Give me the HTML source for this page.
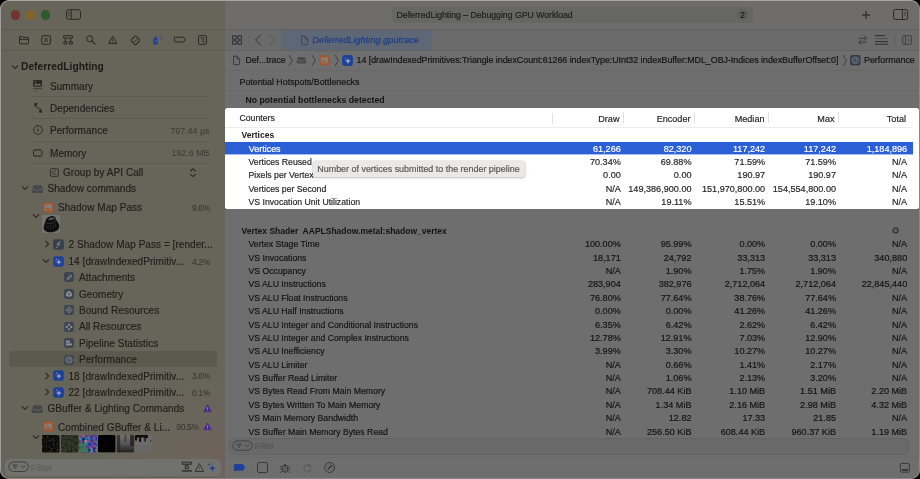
<!DOCTYPE html>
<html><head><meta charset="utf-8">
<style>
*{box-sizing:border-box;margin:0;padding:0}
html,body{width:920px;height:479px;overflow:hidden;background:#000;font-family:"Liberation Sans",sans-serif;}
#win{position:absolute;left:0;top:0;width:920px;height:479px;border-radius:9px;background:#6e6e6e;overflow:hidden}
#inner{position:absolute;left:0;top:0;width:920px;height:479px;overflow:hidden;will-change:transform}
#frame{position:absolute;left:0;top:0;width:920px;height:479px;border-radius:9px;border:1px solid;border-color:#a6a6a6 #8a8a8a #888685 #9f9f9f;pointer-events:none}
.abs{position:absolute}
.t{position:absolute;white-space:pre;line-height:12px;height:12px}
/* sidebar */
#sb{position:absolute;left:0;top:0;width:225px;height:479px;background:radial-gradient(ellipse 130px 80px at 100% 96%, rgba(113,98,93,.7), rgba(113,98,93,0) 100%),#67655a}
.st{position:absolute;white-space:pre;font-size:10px;line-height:12px;height:12px;color:#1f1e1a;letter-spacing:0.05px;margin-top:.6px}
.sv{position:absolute;white-space:pre;font-size:8.9px;line-height:12px;height:12px;color:#3b3a33;text-align:right;right:15.5px}
.sl{position:absolute;left:32px;width:179px;height:1px;background:#5d5b51}
/* main */
.mt{position:absolute;white-space:pre;font-size:8.7px;line-height:12px;height:12px;color:#141414}
.num{position:absolute;white-space:pre;font-size:9.1px;line-height:12px;height:12px;color:#141414;text-align:right}
.mt,.num{-webkit-text-stroke:.18px currentColor}
.st{-webkit-text-stroke:.15px currentColor}
.b{font-weight:700;-webkit-text-stroke:0}
</style></head><body>
<div id="win"><div id="inner">

<!-- ===== SIDEBAR ===== -->
<div id="sb">
 <!-- traffic lights -->
 <div class="abs" style="left:10.5px;top:10.2px;width:9.5px;height:9.5px;border-radius:50%;background:#73342c"></div>
 <div class="abs" style="left:25.5px;top:10.2px;width:9.5px;height:9.5px;border-radius:50%;background:#85662a"></div>
 <div class="abs" style="left:40.5px;top:10.2px;width:9.5px;height:9.5px;border-radius:50%;background:#2d5c2a"></div>
 <div class="abs" style="left:0;top:29px;width:225px;height:1px;background:#5d5b51"></div>
 <div class="abs" style="left:0;top:50px;width:225px;height:1px;background:#5d5b51"></div>
 <svg class="abs" style="left:65px;top:8px" width="17" height="13" viewBox="0 0 17 13"><rect x="1.5" y="1.7" width="14" height="9.6" rx="2.2" fill="none" stroke="#2a2924" stroke-width="1"/><path d="M6.2 1.7V11.3" stroke="#2a2924" stroke-width="1"/><path d="M3 4.3h1.8M3 6h1.8M3 7.7h1.8" stroke="#2a2924" stroke-width=".7"/></svg>
 <svg class="abs" style="left:18px;top:34px" width="12" height="12" viewBox="0 0 12 12"><path d="M1.5 2.6 h3 l0.7 0.8 h4.6 q0.7 0 0.7 0.7 v5 q0 0.7 -0.7 0.7 h-7.6 q-0.7 0 -0.7 -0.7 z" fill="none" stroke="#2a2924" stroke-width="1"/><path d="M1.5 5.3h9" stroke="#2a2924" stroke-width="1"/></svg>
 <svg class="abs" style="left:40px;top:34px" width="12" height="12" viewBox="0 0 12 12"><rect x="1.8" y="1.7" width="8.6" height="8.6" rx="1.2" fill="none" stroke="#2a2924" stroke-width="1"/><path d="M3.9 3.8l4.2 4.2M8.1 3.8l-4.2 4.2" stroke="#2a2924" stroke-width=".9"/></svg>
 <svg class="abs" style="left:62px;top:34px" width="12" height="12" viewBox="0 0 12 12"><rect x="1.7" y="1.7" width="8.8" height="2.4" rx=".2" fill="none" stroke="#2a2924" stroke-width="1"/><path d="M3.4 4.1v3.7M8.8 4.1v3.7" stroke="#2a2924" stroke-width="1"/><rect x="1.9" y="7.8" width="3" height="2.2" rx=".1" fill="none" stroke="#2a2924" stroke-width="1"/><rect x="7.3" y="7.8" width="3" height="2.2" rx=".1" fill="none" stroke="#2a2924" stroke-width="1"/></svg>
 <svg class="abs" style="left:85px;top:34px" width="12" height="12" viewBox="0 0 12 12"><circle cx="4.7" cy="4.7" r="3" fill="none" stroke="#2a2924" stroke-width="1"/><path d="M7 7l3 3" stroke="#2a2924" stroke-width="1.1" stroke-linecap="round"/></svg>
 <svg class="abs" style="left:107px;top:33.5px" width="12" height="12" viewBox="0 0 12 12"><path d="M5.7 2.1 L9.7 9.4 H1.7 Z" fill="none" stroke="#2a2924" stroke-width="1" stroke-linejoin="round"/><path d="M5.7 4.6v2.5" stroke="#2a2924" stroke-width=".9"/><circle cx="5.7" cy="8.2" r=".5" fill="#2a2924"/></svg>
 <svg class="abs" style="left:129px;top:33.5px" width="13" height="13" viewBox="0 0 13 13"><rect x="3.1" y="3.1" width="6.6" height="6.6" rx="1" transform="rotate(45 6.4 6.4)" fill="none" stroke="#2a2924" stroke-width="1"/><path d="M4.9 6.6l1.1 1.1 2-2.4" fill="none" stroke="#2a2924" stroke-width=".9"/></svg>
 <svg class="abs" style="left:151px;top:34px" width="13" height="12" viewBox="0 0 13 12"><path d="M2.2 4.6 L6 3.8 L7 10 L2.6 10.7 Z" fill="#1d3f9c"/><path d="M3.6 2.4 L5.4 2 L5.8 3.6 L3.9 4 Z" fill="#1d3f9c"/><path d="M4 6.3l1.4 1.6M5.4 6.1l-1.4 2" stroke="#6a6e84" stroke-width=".5"/><circle cx="7.8" cy="3.2" r=".45" fill="#1d3f9c"/><circle cx="9.4" cy="2.2" r=".45" fill="#1d3f9c"/><circle cx="9.2" cy="4.2" r=".45" fill="#1d3f9c"/><circle cx="10.9" cy="3" r=".45" fill="#1d3f9c"/><circle cx="10.7" cy="5.3" r=".45" fill="#1d3f9c"/><circle cx="8.2" cy="5" r=".4" fill="#1d3f9c"/></svg>
 <svg class="abs" style="left:173px;top:34px" width="14" height="12" viewBox="0 0 14 12"><path d="M2.4 3.2 h7.8 q.5 0 .8 .4 l1 1.5 q.3 .5 0 1 l-1 1.5 q-.3 .4 -.8 .4 h-7.8 q-.9 0 -.9 -.9 v-3 q0 -.9 .9 -.9 z" fill="none" stroke="#2a2924" stroke-width="1"/></svg>
 <svg class="abs" style="left:197px;top:34px" width="12" height="12" viewBox="0 0 12 12"><rect x="1.5" y="1.7" width="8" height="8.6" rx="1.5" fill="none" stroke="#2a2924" stroke-width="1"/><path d="M3.4 4h4.2M5 5.9h2.6M5 7.8h2.6" stroke="#2a2924" stroke-width=".8"/></svg>
 <!--SBICONS2-->
 <svg class="abs" style="left:10.5px;top:62.5px" width="8" height="8" viewBox="0 0 8 8"><path d="M1.2 2.7 L4 5.4 L6.8 2.7" fill="none" stroke="#2a2924" stroke-width="1.1" stroke-linecap="round" stroke-linejoin="round"/></svg>
 <div class="st b" style="left:21px;top:60.5px;font-size:10.2px;color:#1a1916">DeferredLighting</div>
 <div class="st" style="left:50px;top:80px;">Summary</div>
 <div class="sl" style="top:96px"></div>
 <div class="st" style="left:50px;top:102.3px;">Dependencies</div>
 <div class="sl" style="top:118px"></div>
 <div class="st" style="left:50px;top:124.5px;">Performance</div>
 <div class="sv" style="top:124.5px">797.44 µs</div>
 <div class="sl" style="top:141px"></div>
 <div class="st" style="left:50px;top:147px;">Memory</div>
 <div class="sv" style="top:147px">192.6 MB</div>
 <div class="sl" style="top:163px"></div>
 <div class="st" style="left:63px;top:166.5px;">Group by API Call</div>
 <svg class="abs" style="left:21px;top:184.3px" width="8" height="8" viewBox="0 0 8 8"><path d="M1.2 2.7 L4 5.4 L6.8 2.7" fill="none" stroke="#2a2924" stroke-width="1.1" stroke-linecap="round" stroke-linejoin="round"/></svg>
 <div class="st" style="left:47.5px;top:182.5px;">Shadow commands</div>
 <div class="st" style="left:58px;top:201.5px;">Shadow Map Pass</div>
 <div class="sv" style="top:201.5px;font-size:8.6px;letter-spacing:-.4px;color:#33322c;right:15px">9.6%</div>
 <svg class="abs" style="left:31.5px;top:212.3px" width="8" height="8" viewBox="0 0 8 8"><path d="M1.2 2.7 L4 5.4 L6.8 2.7" fill="none" stroke="#2a2924" stroke-width="1.1" stroke-linecap="round" stroke-linejoin="round"/></svg>
 <svg class="abs" style="left:42.5px;top:240px" width="8" height="8" viewBox="0 0 8 8"><path d="M2.8 1.2 L5.5 4 L2.8 6.8" fill="none" stroke="#2a2924" stroke-width="1.1" stroke-linecap="round" stroke-linejoin="round"/></svg>
 <div class="st" style="left:68.5px;top:238.5px;">2 Shadow Map Pass = [render...</div>
 <svg class="abs" style="left:42px;top:257px" width="8" height="8" viewBox="0 0 8 8"><path d="M1.2 2.7 L4 5.4 L6.8 2.7" fill="none" stroke="#2a2924" stroke-width="1.1" stroke-linecap="round" stroke-linejoin="round"/></svg>
 <div class="st" style="left:68.5px;top:255.5px;">14 [drawIndexedPrimitiv...</div>
 <div class="sv" style="top:255.5px;font-size:8.6px;letter-spacing:-.4px;color:#33322c;right:15px">4.2%</div>
 <div class="st" style="left:79px;top:271.5px;">Attachments</div>
 <div class="st" style="left:79px;top:288px;">Geometry</div>
 <div class="st" style="left:79px;top:304.5px;">Bound Resources</div>
 <div class="st" style="left:79px;top:320.5px;">All Resources</div>
 <div class="st" style="left:79px;top:337px;">Pipeline Statistics</div>
 <div class="abs" style="left:9px;top:351px;width:208px;height:16px;border-radius:3px;background:#5c5a4e"></div>
 <div class="st" style="left:79px;top:353.5px;">Performance</div>
 <svg class="abs" style="left:42.5px;top:371.5px" width="8" height="8" viewBox="0 0 8 8"><path d="M2.8 1.2 L5.5 4 L2.8 6.8" fill="none" stroke="#2a2924" stroke-width="1.1" stroke-linecap="round" stroke-linejoin="round"/></svg>
 <div class="st" style="left:68.5px;top:370px;">18 [drawIndexedPrimitiv...</div>
 <div class="sv" style="top:370px;font-size:8.6px;letter-spacing:-.4px;color:#33322c;right:15px">3.6%</div>
 <svg class="abs" style="left:42.5px;top:388px" width="8" height="8" viewBox="0 0 8 8"><path d="M2.8 1.2 L5.5 4 L2.8 6.8" fill="none" stroke="#2a2924" stroke-width="1.1" stroke-linecap="round" stroke-linejoin="round"/></svg>
 <div class="st" style="left:68.5px;top:386.5px;">22 [drawIndexedPrimitiv...</div>
 <div class="sv" style="top:386.5px;font-size:8.6px;letter-spacing:-.4px;color:#33322c;right:15px">0.1%</div>
 <svg class="abs" style="left:21px;top:404.3px" width="8" height="8" viewBox="0 0 8 8"><path d="M1.2 2.7 L4 5.4 L6.8 2.7" fill="none" stroke="#2a2924" stroke-width="1.1" stroke-linecap="round" stroke-linejoin="round"/></svg>
 <div class="st" style="left:47.5px;top:402.8px;">GBuffer &amp; Lighting Commands</div>
 <div class="st" style="left:58px;top:421px;">Combined GBuffer &amp; Li...</div>
 <div class="sv" style="top:421px;right:auto;left:176.3px;font-size:8.6px;letter-spacing:-.4px;color:#33322c">90.5%</div>
 <svg class="abs" style="left:31.5px;top:432.5px" width="8" height="8" viewBox="0 0 8 8"><path d="M1.2 2.7 L4 5.4 L6.8 2.7" fill="none" stroke="#2a2924" stroke-width="1.1" stroke-linecap="round" stroke-linejoin="round"/></svg>
 <svg class="abs" style="left:32px;top:79px" width="12" height="14" viewBox="0 0 12 14"><rect x="1.2" y="0.9" width="8.8" height="6.8" rx=".8" fill="#2a2924"/><path d="M1.8 6.6 L4.2 4 L5.8 5.6 L7.2 4.6 L9.4 6.6 Z" fill="#6f6d63"/><circle cx="3.4" cy="2.9" r=".7" fill="#6f6d63"/><path d="M1.2 9.6h8.8" stroke="#3a3933" stroke-width=".9"/><path d="M1.2 11.9h5.6" stroke="#504e46" stroke-width=".8"/></svg>
 <svg class="abs" style="left:32px;top:101px" width="12" height="14" viewBox="0 0 12 14"><rect x="2.2" y="2" width="2.9" height="2.9" rx=".6" fill="#2a2924"/><rect x="7.1" y="8.8" width="2.9" height="2.9" rx=".6" fill="#2a2924"/><path d="M3.7 4.8 C3.7 8.2 8.5 5.6 8.5 9" fill="none" stroke="#2a2924" stroke-width="1"/></svg>
 <svg class="abs" style="left:32px;top:124px" width="12" height="12" viewBox="0 0 12 12"><circle cx="5.95" cy="5.9" r="4.4" fill="none" stroke="#2a2924" stroke-width=".9"/><path d="M5.95 2.3v1.3" stroke="#2a2924" stroke-width=".8"/><path d="M5.95 5v1.6" stroke="#2a2924" stroke-width=".9" stroke-linecap="round"/><circle cx="5.95" cy="6.6" r=".6" fill="#2a2924"/></svg>
 <svg class="abs" style="left:32px;top:147px" width="12" height="12" viewBox="0 0 12 12"><rect x="1.5" y="3" width="8.4" height="6" rx="1.2" fill="none" stroke="#2a2924" stroke-width="1"/><path d="M3.6 2v1M7.8 2v1M3.6 9v1.1M7.8 9v1.1" stroke="#2a2924" stroke-width="1"/></svg>
 <svg class="abs" style="left:49px;top:167px" width="11" height="11" viewBox="0 0 11 11"><rect x="1.4" y="1.6" width="8" height="7.8" rx="1.5" fill="none" stroke="#2a2924" stroke-width=".9"/><path d="M6.9 4.4 A1.8 1.8 0 1 0 6.9 6.7" fill="none" stroke="#2a2924" stroke-width=".8"/></svg>
 <svg class="abs" style="left:188px;top:166px" width="10" height="13" viewBox="0 0 10 13"><path d="M2.6 5 L5 2.7 L7.4 5 M2.6 8.3 L5 10.6 L7.4 8.3" fill="none" stroke="#2a2924" stroke-width="1.05" stroke-linecap="round" stroke-linejoin="round"/></svg>
 <svg class="abs" style="left:31.3px;top:183.9px" width="13" height="11" viewBox="0 0 13 11"><path d="M3.2 1.2 h6.4 q.6 0 .9 .6 l1.5 3.3 v3 q0 1 -1 1 h-9.2 q-1 0 -1 -1 v-3 l1.5 -3.3 q.3 -.6 .9 -.6 z" fill="#44474c"/><path d="M1 5.3 h3.3 q.3 1.3 2.1 1.3 q1.8 0 2.1 -1.3 h3.3" fill="none" stroke="#69675c" stroke-width=".8"/></svg>
 <svg class="abs" style="left:31.3px;top:403.9px" width="13" height="11" viewBox="0 0 13 11"><path d="M3.2 1.2 h6.4 q.6 0 .9 .6 l1.5 3.3 v3 q0 1 -1 1 h-9.2 q-1 0 -1 -1 v-3 l1.5 -3.3 q.3 -.6 .9 -.6 z" fill="#44474c"/><path d="M1 5.3 h3.3 q.3 1.3 2.1 1.3 q1.8 0 2.1 -1.3 h3.3" fill="none" stroke="#69675c" stroke-width=".8"/></svg>
 <svg class="abs" style="left:43px;top:201.7px" width="11" height="11" viewBox="0 0 11 11"><rect x=".3" y=".4" width="10" height="10" rx="2.2" fill="#a2562f"/><rect x="1.7" y="2.4" width="7.2" height="5.9" rx=".9" fill="#83817c"/><path d="M2.4 7.4 L4.2 5.4 L5.4 6.5 L6.6 5.7 L8.2 7.4 Z" fill="#a2562f"/><circle cx="3.9" cy="4.1" r=".7" fill="#a2562f"/></svg>
 <svg class="abs" style="left:43px;top:421.3px" width="11" height="11" viewBox="0 0 11 11"><rect x=".3" y=".4" width="10" height="10" rx="2.2" fill="#a2562f"/><rect x="1.7" y="2.4" width="7.2" height="5.9" rx=".9" fill="#83817c"/><path d="M2.4 7.4 L4.2 5.4 L5.4 6.5 L6.6 5.7 L8.2 7.4 Z" fill="#a2562f"/><circle cx="3.9" cy="4.1" r=".7" fill="#a2562f"/></svg>
 <svg class="abs" style="left:42px;top:215px" width="18" height="18" viewBox="0 0 18 18"><rect width="18" height="18" rx="1.5" fill="#757471"/><path d="M2.4 15 C0.8 12.6 2.6 8.8 3.4 6.4 C3.8 3.6 6.4 1.2 10.4 1 C13 0.9 14.2 2.8 13.8 4.8 C16 6.6 17.6 9.6 17.2 12.4 C16.6 15.4 12.8 17.2 8.6 17.3 C6 17.3 3.6 16.6 2.4 15 Z" fill="#0e0e0e"/><path d="M5.8 4.6 C7.4 2.8 10.6 2.2 12 3.2 C11 5 7.6 5.8 5.8 4.6 Z" fill="#454545"/><path d="M8 2.6 L9.6 4.8 M11 1.8 L12.4 4.6" stroke="#8a8a8a" stroke-width=".7"/><path d="M3.8 7.6 C6.6 9.4 12 8.6 13.8 5.6" stroke="#3a3a3a" stroke-width=".8" fill="none"/><path d="M6 9.8v4M8.6 10.2v4M11.2 9.6v3.8M13.4 8.6v3.4" stroke="#2c2c2c" stroke-width=".8"/></svg>
 <svg class="abs" style="left:53px;top:239px" width="11" height="11" viewBox="0 0 11 11"><rect x=".2" y=".2" width="10.6" height="10.6" rx="2.4" fill="#373e4b"/><path d="M7.3 2.7 Q5.9 2.2 5.6 3.9 L4.9 7.6 Q4.6 9 3.5 8.5 M3.9 5.2 H7.1" fill="none" stroke="#878b92" stroke-width=".9" stroke-linecap="round"/></svg>
 <svg class="abs" style="left:53px;top:255.6px" width="11" height="11" viewBox="0 0 11 11"><rect x=".2" y=".2" width="10.6" height="10.6" rx="2.4" fill="#1f4097"/><path d="M5.9 3.7 Q6.1 5.9 8.4 6.1 Q6.1 6.3 5.9 8.6 Q5.7 6.3 3.4 6.1 Q5.7 5.9 5.9 3.7 Z" fill="#a3add0" stroke="#a3add0" stroke-width=".25"/><circle cx="3.6" cy="3.3" r=".7" fill="#7f8cb8"/><circle cx="2.9" cy="5" r=".4" fill="#7f8cb8"/></svg>
 <svg class="abs" style="left:53px;top:370.4px" width="11" height="11" viewBox="0 0 11 11"><rect x=".2" y=".2" width="10.6" height="10.6" rx="2.4" fill="#1f4097"/><path d="M5.9 3.7 Q6.1 5.9 8.4 6.1 Q6.1 6.3 5.9 8.6 Q5.7 6.3 3.4 6.1 Q5.7 5.9 5.9 3.7 Z" fill="#a3add0" stroke="#a3add0" stroke-width=".25"/><circle cx="3.6" cy="3.3" r=".7" fill="#7f8cb8"/><circle cx="2.9" cy="5" r=".4" fill="#7f8cb8"/></svg>
 <svg class="abs" style="left:53px;top:387px" width="11" height="11" viewBox="0 0 11 11"><rect x=".2" y=".2" width="10.6" height="10.6" rx="2.4" fill="#1f4097"/><path d="M5.9 3.7 Q6.1 5.9 8.4 6.1 Q6.1 6.3 5.9 8.6 Q5.7 6.3 3.4 6.1 Q5.7 5.9 5.9 3.7 Z" fill="#a3add0" stroke="#a3add0" stroke-width=".25"/><circle cx="3.6" cy="3.3" r=".7" fill="#7f8cb8"/><circle cx="2.9" cy="5" r=".4" fill="#7f8cb8"/></svg>
 <svg class="abs" style="left:64px;top:272px" width="10" height="10" viewBox="0 0 10 10"><rect x=".1" y=".1" width="9.8" height="9.8" rx="2.1" fill="#3d4451"/><path d="M3 6.6 L6 3.4 Q6.9 2.6 7.5 3.3 Q8.1 4 7.3 4.8 L4.4 7.6 Q3.9 8 3.5 7.6 Q3.2 7.2 3.7 6.7 L6.2 4.3" fill="none" stroke="#8c9097" stroke-width=".75" stroke-linecap="round"/></svg>
 <svg class="abs" style="left:64px;top:288.6px" width="10" height="10" viewBox="0 0 10 10"><rect x=".1" y=".1" width="9.8" height="9.8" rx="2.1" fill="#3d4451"/><path d="M5 2 L8 3.5 V6.8 L5 8.3 L2 6.8 V3.5 Z" fill="#8c9097"/><path d="M2 3.5 L5 5 L8 3.5 M5 5 V8.3" fill="none" stroke="#3d4451" stroke-width=".6"/></svg>
 <svg class="abs" style="left:64px;top:305px" width="10" height="10" viewBox="0 0 10 10"><rect x=".1" y=".1" width="9.8" height="9.8" rx="2.1" fill="#3d4451"/><circle cx="5" cy="2.7" r="1" fill="none" stroke="#8c9097" stroke-width=".6"/><circle cx="5" cy="7.3" r="1" fill="none" stroke="#8c9097" stroke-width=".6"/><circle cx="2.7" cy="5" r="1" fill="none" stroke="#8c9097" stroke-width=".6"/><circle cx="7.3" cy="5" r="1" fill="none" stroke="#8c9097" stroke-width=".6"/><circle cx="5" cy="5" r=".7" fill="#8c9097"/></svg>
 <svg class="abs" style="left:64px;top:321.5px" width="10" height="10" viewBox="0 0 10 10"><rect x=".1" y=".1" width="9.8" height="9.8" rx="2.1" fill="#3d4451"/><circle cx="5" cy="2.7" r="1.15" fill="#8c9097"/><circle cx="5" cy="7.3" r="1.15" fill="#8c9097"/><circle cx="2.7" cy="5" r="1.15" fill="#8c9097"/><circle cx="7.3" cy="5" r="1.15" fill="#8c9097"/></svg>
 <svg class="abs" style="left:64px;top:338px" width="10" height="10" viewBox="0 0 10 10"><rect x=".1" y=".1" width="9.8" height="9.8" rx="2.1" fill="#3d4451"/><path d="M2.3 2v6" stroke="#8c9097" stroke-width=".8"/><rect x="2.8" y="2.6" width="3.2" height="2" fill="#8c9097"/><rect x="2.8" y="5.4" width="5.2" height="2" fill="#8c9097"/></svg>
 <svg class="abs" style="left:64px;top:354.6px" width="10" height="10" viewBox="0 0 10 10"><rect x=".1" y=".1" width="9.8" height="9.8" rx="2.1" fill="#3d4451"/><circle cx="5" cy="5" r="3.2" fill="none" stroke="#8c9097" stroke-width=".7"/><circle cx="5" cy="5" r="1.7" fill="none" stroke="#8c9097" stroke-width=".6"/><path d="M5 5 L6.6 3.6" stroke="#8c9097" stroke-width=".6"/></svg>
 <svg class="abs" style="left:203px;top:403.8px" width="9" height="9" viewBox="0 0 9 9"><path d="M4.5 .8 L8.4 7.8 H.6 Z" fill="#4a2a8e" stroke="#4a2a8e" stroke-width=".6" stroke-linejoin="round"/><path d="M4.5 3.2v2.4" stroke="#a79bc4" stroke-width=".8"/><circle cx="4.5" cy="6.7" r=".45" fill="#a79bc4"/></svg>
 <svg class="abs" style="left:203px;top:422.2px" width="9" height="9" viewBox="0 0 9 9"><path d="M4.5 .8 L8.4 7.8 H.6 Z" fill="#4a2a8e" stroke="#4a2a8e" stroke-width=".6" stroke-linejoin="round"/><path d="M4.5 3.2v2.4" stroke="#a79bc4" stroke-width=".8"/><circle cx="4.5" cy="6.7" r=".45" fill="#a79bc4"/></svg>
 <svg class="abs" style="left:42.4px;top:435px" width="111" height="18" viewBox="0 0 111 18"><defs>
<filter id="n1" x="0" y="0" width="100%" height="100%" color-interpolation-filters="sRGB"><feTurbulence type="fractalNoise" baseFrequency="0.55" numOctaves="2" seed="3"/><feColorMatrix type="matrix" values="0 0 0 0 0.24  0 0 0 0 0.25  0 0 0 0 0.19  4 0 0 0 -2.2"/><feComposite operator="over" in2="SourceGraphic"/></filter>
<filter id="n2" x="0" y="0" width="100%" height="100%" color-interpolation-filters="sRGB"><feTurbulence type="fractalNoise" baseFrequency="0.5" numOctaves="2" seed="8"/><feColorMatrix type="matrix" values="0 0 0 0 0.09  0 0 0 0 0.10  0 0 0 0 0.06  4 0 0 0 -1.9"/><feComposite operator="over" in2="SourceGraphic"/></filter>
<filter id="n3" x="0" y="0" width="100%" height="100%" color-interpolation-filters="sRGB"><feTurbulence type="fractalNoise" baseFrequency="0.35" numOctaves="2" seed="5"/><feColorMatrix type="matrix" values="1.1 0 0 0 -0.25  0 1.1 0 0 -0.22  0 0 0.9 0 0.1  0 0 0 0 1"/></filter>
<linearGradient id="g5" x1="0" y1="0" x2="0" y2="1"><stop offset="0" stop-color="#727272"/><stop offset=".5" stop-color="#555"/><stop offset="1" stop-color="#1e1e1e"/></linearGradient>
<clipPath id="cp"><rect width="17.6" height="17.6" rx="1.6"/></clipPath>
</defs><g clip-path="url(#cp)"><rect width="17.6" height="17.6" fill="#0b0c09"/><rect width="17.6" height="17.6" fill="#0b0c09" filter="url(#n1)"/></g><g transform="translate(19 0)" clip-path="url(#cp)"><rect width="17.6" height="17.6" fill="#33372a"/><rect width="17.6" height="17.6" fill="#33372a" filter="url(#n2)"/></g><g transform="translate(37.2 0)" clip-path="url(#cp)"><rect width="17.6" height="17.6" fill="#3a3f8c"/><rect width="17.6" height="17.6" filter="url(#n3)"/><path d="M0 9 Q4 7 7 11 T10 17.6 H0 Z" fill="#3a7a42" opacity=".7"/><path d="M9 0 Q12 6 10 12 L14 14 L17.6 6 V0 Z" fill="#4a3c98" opacity=".5"/></g><g transform="translate(56 0)" clip-path="url(#cp)"><rect width="17.6" height="17.6" fill="#020202"/><rect x="6" y="7" width=".8" height=".8" fill="#5a1010"/></g><g transform="translate(74.7 0)" clip-path="url(#cp)"><rect width="17.6" height="17.6" fill="url(#g5)"/><rect x="0" y="0" width="3.4" height="17.6" fill="#222" opacity=".7"/><rect x="13.5" y="0" width="4.1" height="11" fill="#1b1b1b" opacity=".8"/><rect x="7.6" y="0" width="2.2" height="7" fill="#3a3a3a" opacity=".7"/></g><g transform="translate(92.8 0)" clip-path="url(#cp)"><rect width="17.6" height="17.6" fill="#6b6b6b"/><path d="M0 0 H13 V3 H11 V6.5 H9.6 V2.4 H6.2 V7 H4.4 V2.6 H2.2 V5.4 H0 Z" fill="#0c0c0c"/><rect x="15.4" y="5.4" width="1" height="1.2" fill="#111"/><rect x="0" y="10" width="17.6" height="7.6" fill="#686868"/></g></svg>
 <div class="abs" style="left:5px;top:459px;width:215.5px;height:16.5px;border-radius:5px;background:#71716e"></div>
 <svg class="abs" style="left:7.5px;top:461.2px" width="22" height="12" viewBox="0 0 22 12"><rect x=".9" y=".9" width="19.4" height="9.6" rx="4.8" fill="none" stroke="#34332f" stroke-width=".8"/><path d="M4.3 4h5.6M5.3 5.7h3.6M6.3 7.4h1.6" stroke="#34332f" stroke-width=".8"/><path d="M13.2 4.7l1.9 1.9 1.9-1.9" fill="none" stroke="#34332f" stroke-width=".8" stroke-linecap="round" stroke-linejoin="round"/></svg>
 <div class="st" style="left:30.6px;top:461px;color:#5f5e59;font-size:9.6px">Filter</div>
 <svg class="abs" style="left:180.5px;top:461.2px" width="12" height="12" viewBox="0 0 12 12"><rect x="1.2" y="1.2" width="9.2" height="2" fill="none" stroke="#2e2d2a" stroke-width="1"/><rect x="4.3" y="4.9" width="3" height="2.6" fill="none" stroke="#2e2d2a" stroke-width="1"/><path d="M5.8 3.2v1.7" stroke="#2e2d2a" stroke-width="1"/><path d="M.8 9.9h10" stroke="#2e2d2a" stroke-width="1.5"/></svg>
 <svg class="abs" style="left:193.6px;top:461.8px" width="11" height="11" viewBox="0 0 11 11"><path d="M5.4 1.5 L9.6 9.5 H1.2 Z" fill="none" stroke="#2e2d2a" stroke-width=".9" stroke-linejoin="round"/><path d="M5.4 4.3v2.6" stroke="#4a4945" stroke-width=".8"/><circle cx="5.4" cy="8" r=".45" fill="#4a4945"/></svg>
 <svg class="abs" style="left:206.3px;top:461px" width="11" height="12" viewBox="0 0 11 12"><path d="M6.3 3.6 Q6.6 7 9.9 7.3 Q6.6 7.6 6.3 11 Q6 7.6 2.7 7.3 Q6 7 6.3 3.6 Z" fill="#1f4097"/><path d="M3 1.9 Q3.1 3.3 4.5 3.4 Q3.1 3.5 3 4.9 Q2.9 3.5 1.5 3.4 Q2.9 3.3 3 1.9 Z" fill="#1f4097"/><circle cx="5.2" cy="1.5" r=".5" fill="#1f4097"/></svg>
 <!--SBROWS4-->
</div>

<!-- ===== MAIN ===== -->
<div id="main" class="abs" style="left:225px;top:0;width:695px;height:479px;background:#6e6e6e">
 <div class="abs" style="left:0;top:0;width:695px;height:29px;background:#6e6d6c"></div>
 <div class="abs" style="left:0;top:29px;width:695px;height:1px;background:#616161"></div>
 <div class="abs" style="left:166.5px;top:7px;width:361.5px;height:16px;border-radius:4px;background:#666665"></div>
 <div class="mt" style="left:171.60000000000002px;top:9px;font-size:8.7px;color:#1d1d1d">DeferredLighting – Debugging GPU Workload</div>
 <div class="abs" style="left:512px;top:9.3px;width:11px;height:11px;border-radius:5.5px;background:#5f5f5e"></div>
 <div class="mt" style="left:512px;top:9px;width:11px;text-align:center;font-size:8.3px;color:#181818">2</div>
 <div class="abs" style="left:0;top:30px;width:695px;height:20px;background:#6b6b6b"></div>
 <div class="abs" style="left:57px;top:30px;width:150px;height:20px;background:#5e6775"></div>
 <div class="mt" style="left:87.5px;top:34px;font-size:9px;font-style:italic;color:#1b3c86;letter-spacing:0.1px">DeferredLighting.gputrace</div>
 <div class="abs" style="left:0;top:50px;width:695px;height:1px;background:#626262"></div>
 <div class="mt" style="left:20.5px;top:54px;font-size:8.7px">Def...trace</div>
 <div class="mt" style="left:131.5px;top:54px;font-size:8.9px;letter-spacing:-0.04px">14 [drawIndexedPrimitives:Triangle indexCount:61266 indexType:UInt32 indexBuffer:MDL_OBJ-Indices indexBufferOffset:0]</div>
 <div class="mt" style="left:639px;top:54px;font-size:8.9px">Performance</div>
 <div class="abs" style="left:0;top:70px;width:695px;height:1px;background:#676767"></div>
 <div class="mt" style="left:14.5px;top:76px;font-size:8.85px">Potential Hotspots/Bottlenecks</div>
 <div class="abs" style="left:0;top:90px;width:695px;height:1px;background:#696969"></div>
 <div class="mt b" style="left:20.5px;top:94.3px;font-size:8.7px;color:#131313">No potential bottlenecks detected</div>
 <svg class="abs" style="left:636px;top:10px" width="10" height="10" viewBox="0 0 10 10"><path d="M5 1v8M1 5h8" stroke="#343434" stroke-width="1.3"/></svg>
 <svg class="abs" style="left:667px;top:8px" width="17" height="13" viewBox="0 0 17 13"><rect x="1.6" y="1.5" width="14" height="10" rx="1.8" fill="none" stroke="#2b2b2b" stroke-width="1"/><path d="M10.4 1.5v10" stroke="#2b2b2b" stroke-width="1"/><path d="M12 4h2M12 5.6h2M12 7.2h2" stroke="#2b2b2b" stroke-width=".6"/></svg>
 <svg class="abs" style="left:6px;top:34px" width="12" height="12" viewBox="0 0 12 12"><rect x="1.5" y="1.7" width="3.7" height="3.5" rx=".2" fill="none" stroke="#2e2e2e" stroke-width="1"/><rect x="6.8" y="1.7" width="3.7" height="3.5" rx=".2" fill="none" stroke="#2e2e2e" stroke-width="1"/><rect x="1.5" y="6.8" width="3.7" height="3.5" rx=".2" fill="none" stroke="#2e2e2e" stroke-width="1"/><rect x="6.8" y="6.8" width="3.7" height="3.5" rx=".2" fill="none" stroke="#2e2e2e" stroke-width="1"/></svg>
 <div class="abs" style="left:23px;top:36px;width:1px;height:8px;background:#646464"></div>
 <svg class="abs" style="left:28px;top:33px" width="10" height="14" viewBox="0 0 10 14"><path d="M7.6 2 L2.6 7 L7.6 12" fill="none" stroke="#353535" stroke-width="1" stroke-linecap="round" stroke-linejoin="round"/></svg>
 <svg class="abs" style="left:43px;top:33px" width="10" height="14" viewBox="0 0 10 14"><path d="M2.4 2 L7.4 7 L2.4 12" fill="none" stroke="#565656" stroke-width="1" stroke-linecap="round" stroke-linejoin="round"/></svg>
 <svg class="abs" style="left:75.3px;top:35px" width="9" height="11" viewBox="0 0 9 11"><path d="M1.6 1.2 h3.4 l2.6 2.6 v5 q0 .9 -.9 .9 h-4.2 q-.9 0 -.9 -.9 v-6.7 q0 -.9 .9 -.9 z" fill="none" stroke="#3b424f" stroke-width=".9" stroke-linejoin="round"/><path d="M5 1.2 v2.6 h2.6" fill="none" stroke="#3b424f" stroke-width=".8"/></svg>
 <svg class="abs" style="left:7.3px;top:55.2px" width="9" height="11" viewBox="0 0 9 11"><path d="M1.6 1.2 h3.4 l2.6 2.6 v5 q0 .9 -.9 .9 h-4.2 q-.9 0 -.9 -.9 v-6.7 q0 -.9 .9 -.9 z" fill="none" stroke="#2d3442" stroke-width=".9" stroke-linejoin="round"/><path d="M5 1.2 v2.6 h2.6" fill="none" stroke="#2d3442" stroke-width=".8"/></svg>
 <svg class="abs" style="left:63.2px;top:54px" width="6" height="13" viewBox="0 0 6 13"><path d="M1.2 1.4 L4.4 6.5 L1.2 11.6" fill="none" stroke="#3a3a3a" stroke-width=".9" stroke-linecap="round" stroke-linejoin="round"/></svg>
 <svg class="abs" style="left:86.2px;top:54px" width="6" height="13" viewBox="0 0 6 13"><path d="M1.2 1.4 L4.4 6.5 L1.2 11.6" fill="none" stroke="#3a3a3a" stroke-width=".9" stroke-linecap="round" stroke-linejoin="round"/></svg>
 <svg class="abs" style="left:109.2px;top:54px" width="6" height="13" viewBox="0 0 6 13"><path d="M1.2 1.4 L4.4 6.5 L1.2 11.6" fill="none" stroke="#3a3a3a" stroke-width=".9" stroke-linecap="round" stroke-linejoin="round"/></svg>
 <svg class="abs" style="left:616.5px;top:54px" width="6" height="13" viewBox="0 0 6 13"><path d="M1.2 1.4 L4.4 6.5 L1.2 11.6" fill="none" stroke="#3a3a3a" stroke-width=".9" stroke-linecap="round" stroke-linejoin="round"/></svg>
 <svg class="abs" style="left:71px;top:56.3px" width="11" height="9" viewBox="0 0 11 9"><path d="M2.8 1 h5.4 q.5 0 .8 .5 l1.3 2.7 v2.5 q0 .9 -.9 .9 h-7.8 q-.9 0 -.9 -.9 v-2.5 l1.3 -2.7 q.3 -.5 .8 -.5 z" fill="#484a4d"/><path d="M1 4.4 h2.8 q.3 1.1 1.7 1.1 q1.4 0 1.7 -1.1 h2.8" fill="none" stroke="#6e6e6e" stroke-width=".7"/></svg>
 <svg class="abs" style="left:94px;top:55px" width="11" height="11" viewBox="0 0 11 11"><rect x=".2" y=".2" width="10.4" height="10.2" rx="2.4" fill="#a2562f"/><rect x="1.8" y="2.5" width="7.2" height="5.7" rx=".9" fill="#83817c"/><path d="M2.5 7.3 L4.3 5.3 L5.5 6.4 L6.7 5.6 L8.3 7.3 Z" fill="#a2562f"/><circle cx="4" cy="4.1" r=".7" fill="#a2562f"/></svg>
 <svg class="abs" style="left:117px;top:55px" width="11" height="11" viewBox="0 0 11 11"><rect x=".1" y=".1" width="10.8" height="10.8" rx="3" fill="#1f4097"/><path d="M6 3.5 Q6.2 5.9 8.6 6.1 Q6.2 6.3 6 8.7 Q5.8 6.3 3.4 6.1 Q5.8 5.9 6 3.5 Z" fill="#a3add0" stroke="#a3add0" stroke-width=".25"/><circle cx="3.7" cy="3.1" r=".7" fill="#7f8cb8"/><circle cx="2.9" cy="4.9" r=".4" fill="#7f8cb8"/></svg>
 <svg class="abs" style="left:624.6px;top:55px" width="11" height="11" viewBox="0 0 11 11"><rect x=".1" y=".1" width="10.4" height="10.4" rx="2.3" fill="#343b47"/><circle cx="5.3" cy="5.3" r="3.4" fill="none" stroke="#8c9097" stroke-width=".7"/><circle cx="5.3" cy="5.3" r="1.8" fill="none" stroke="#8c9097" stroke-width=".6"/><path d="M5.3 5.3 L7 3.8" stroke="#8c9097" stroke-width=".6"/></svg>
 <svg class="abs" style="left:632px;top:34px" width="11" height="12" viewBox="0 0 11 12"><path d="M2 4.3 H9.3 M7 1.9 L9.4 4.3 L7 6.7 M9.2 8.3 H1.8 M4.2 5.9 L1.8 8.3 L4.2 10.7" fill="none" stroke="#3a3a3a" stroke-width=".9" stroke-linecap="round" stroke-linejoin="round"/></svg>
 <svg class="abs" style="left:649px;top:34px" width="15" height="12" viewBox="0 0 15 12"><path d="M1 1.6h10" stroke="#2f2f2f" stroke-width="1"/><path d="M1 4.6h13" stroke="#4e4e4e" stroke-width=".9"/><path d="M1 7.6h13" stroke="#2f2f2f" stroke-width="1"/><path d="M1 10.2h13" stroke="#2f2f2f" stroke-width="1"/></svg>
 <div class="abs" style="left:670px;top:36px;width:1px;height:8px;background:#626262"></div>
 <svg class="abs" style="left:676px;top:34px" width="12" height="12" viewBox="0 0 12 12"><rect x="1.6" y="1.7" width="8.8" height="8.6" rx="1.6" fill="none" stroke="#3a3a3a" stroke-width=".9"/><path d="M4.5 1.7v8.6" stroke="#3a3a3a" stroke-width=".9"/><path d="M7.4 4.3v3.4M6.2 6h2.4" stroke="#4a4a4a" stroke-width=".6"/></svg>
 <!--MAINTOP3-->
 <div class="mt b" style="left:16.5px;top:225.3px;color:#131313;font-size:8.5px">Vertex Shader  AAPLShadow.metal:shadow_vertex</div>
 <div class="mt" style="left:23.5px;top:238.2px;">Vertex Stage Time</div>
 <div class="num" style="left:295.79999999999995px;width:100px;top:238.2px;">100.00%</div>
 <div class="num" style="left:366.5px;width:100px;top:238.2px;">95.99%</div>
 <div class="num" style="left:440.20000000000005px;width:100px;top:238.2px;">0.00%</div>
 <div class="num" style="left:511px;width:100px;top:238.2px;">0.00%</div>
 <div class="num" style="left:582.2px;width:100px;top:238.2px;">N/A</div>
 <div class="mt" style="left:23.5px;top:251.58999999999997px;">VS Invocations</div>
 <div class="num" style="left:295.79999999999995px;width:100px;top:251.58999999999997px;">18,171</div>
 <div class="num" style="left:366.5px;width:100px;top:251.58999999999997px;">24,792</div>
 <div class="num" style="left:440.20000000000005px;width:100px;top:251.58999999999997px;">33,313</div>
 <div class="num" style="left:511px;width:100px;top:251.58999999999997px;">33,313</div>
 <div class="num" style="left:582.2px;width:100px;top:251.58999999999997px;">340,880</div>
 <div class="mt" style="left:23.5px;top:264.98px;">VS Occupancy</div>
 <div class="num" style="left:295.79999999999995px;width:100px;top:264.98px;">N/A</div>
 <div class="num" style="left:366.5px;width:100px;top:264.98px;">1.90%</div>
 <div class="num" style="left:440.20000000000005px;width:100px;top:264.98px;">1.75%</div>
 <div class="num" style="left:511px;width:100px;top:264.98px;">1.90%</div>
 <div class="num" style="left:582.2px;width:100px;top:264.98px;">N/A</div>
 <div class="mt" style="left:23.5px;top:278.37px;">VS ALU Instructions</div>
 <div class="num" style="left:295.79999999999995px;width:100px;top:278.37px;">283,904</div>
 <div class="num" style="left:366.5px;width:100px;top:278.37px;">382,976</div>
 <div class="num" style="left:440.20000000000005px;width:100px;top:278.37px;">2,712,064</div>
 <div class="num" style="left:511px;width:100px;top:278.37px;">2,712,064</div>
 <div class="num" style="left:582.2px;width:100px;top:278.37px;">22,845,440</div>
 <div class="mt" style="left:23.5px;top:291.76px;">VS ALU Float Instructions</div>
 <div class="num" style="left:295.79999999999995px;width:100px;top:291.76px;">76.80%</div>
 <div class="num" style="left:366.5px;width:100px;top:291.76px;">77.64%</div>
 <div class="num" style="left:440.20000000000005px;width:100px;top:291.76px;">38.76%</div>
 <div class="num" style="left:511px;width:100px;top:291.76px;">77.64%</div>
 <div class="num" style="left:582.2px;width:100px;top:291.76px;">N/A</div>
 <div class="mt" style="left:23.5px;top:305.15px;">VS ALU Half Instructions</div>
 <div class="num" style="left:295.79999999999995px;width:100px;top:305.15px;">0.00%</div>
 <div class="num" style="left:366.5px;width:100px;top:305.15px;">0.00%</div>
 <div class="num" style="left:440.20000000000005px;width:100px;top:305.15px;">41.26%</div>
 <div class="num" style="left:511px;width:100px;top:305.15px;">41.26%</div>
 <div class="num" style="left:582.2px;width:100px;top:305.15px;">N/A</div>
 <div class="mt" style="left:23.5px;top:318.53999999999996px;">VS ALU Integer and Conditional Instructions</div>
 <div class="num" style="left:295.79999999999995px;width:100px;top:318.53999999999996px;">6.35%</div>
 <div class="num" style="left:366.5px;width:100px;top:318.53999999999996px;">6.42%</div>
 <div class="num" style="left:440.20000000000005px;width:100px;top:318.53999999999996px;">2.62%</div>
 <div class="num" style="left:511px;width:100px;top:318.53999999999996px;">6.42%</div>
 <div class="num" style="left:582.2px;width:100px;top:318.53999999999996px;">N/A</div>
 <div class="mt" style="left:23.5px;top:331.93px;">VS ALU Integer and Complex Instructions</div>
 <div class="num" style="left:295.79999999999995px;width:100px;top:331.93px;">12.78%</div>
 <div class="num" style="left:366.5px;width:100px;top:331.93px;">12.91%</div>
 <div class="num" style="left:440.20000000000005px;width:100px;top:331.93px;">7.03%</div>
 <div class="num" style="left:511px;width:100px;top:331.93px;">12.90%</div>
 <div class="num" style="left:582.2px;width:100px;top:331.93px;">N/A</div>
 <div class="mt" style="left:23.5px;top:345.32px;">VS ALU Inefficiency</div>
 <div class="num" style="left:295.79999999999995px;width:100px;top:345.32px;">3.99%</div>
 <div class="num" style="left:366.5px;width:100px;top:345.32px;">3.30%</div>
 <div class="num" style="left:440.20000000000005px;width:100px;top:345.32px;">10.27%</div>
 <div class="num" style="left:511px;width:100px;top:345.32px;">10.27%</div>
 <div class="num" style="left:582.2px;width:100px;top:345.32px;">N/A</div>
 <div class="mt" style="left:23.5px;top:358.71px;">VS ALU Limiter</div>
 <div class="num" style="left:295.79999999999995px;width:100px;top:358.71px;">N/A</div>
 <div class="num" style="left:366.5px;width:100px;top:358.71px;">0.66%</div>
 <div class="num" style="left:440.20000000000005px;width:100px;top:358.71px;">1.41%</div>
 <div class="num" style="left:511px;width:100px;top:358.71px;">2.17%</div>
 <div class="num" style="left:582.2px;width:100px;top:358.71px;">N/A</div>
 <div class="mt" style="left:23.5px;top:372.1px;">VS Buffer Read Limiter</div>
 <div class="num" style="left:295.79999999999995px;width:100px;top:372.1px;">N/A</div>
 <div class="num" style="left:366.5px;width:100px;top:372.1px;">1.06%</div>
 <div class="num" style="left:440.20000000000005px;width:100px;top:372.1px;">2.13%</div>
 <div class="num" style="left:511px;width:100px;top:372.1px;">3.20%</div>
 <div class="num" style="left:582.2px;width:100px;top:372.1px;">N/A</div>
 <div class="mt" style="left:23.5px;top:385.49px;">VS Bytes Read From Main Memory</div>
 <div class="num" style="left:295.79999999999995px;width:100px;top:385.49px;">N/A</div>
 <div class="num" style="left:366.5px;width:100px;top:385.49px;">708.44 KiB</div>
 <div class="num" style="left:440.20000000000005px;width:100px;top:385.49px;">1.10 MiB</div>
 <div class="num" style="left:511px;width:100px;top:385.49px;">1.51 MiB</div>
 <div class="num" style="left:582.2px;width:100px;top:385.49px;">2.20 MiB</div>
 <div class="mt" style="left:23.5px;top:398.88px;">VS Bytes Written To Main Memory</div>
 <div class="num" style="left:295.79999999999995px;width:100px;top:398.88px;">N/A</div>
 <div class="num" style="left:366.5px;width:100px;top:398.88px;">1.34 MiB</div>
 <div class="num" style="left:440.20000000000005px;width:100px;top:398.88px;">2.16 MiB</div>
 <div class="num" style="left:511px;width:100px;top:398.88px;">2.98 MiB</div>
 <div class="num" style="left:582.2px;width:100px;top:398.88px;">4.32 MiB</div>
 <div class="mt" style="left:23.5px;top:412.27px;">VS Main Memory Bandwidth</div>
 <div class="num" style="left:295.79999999999995px;width:100px;top:412.27px;">N/A</div>
 <div class="num" style="left:366.5px;width:100px;top:412.27px;">12.82</div>
 <div class="num" style="left:440.20000000000005px;width:100px;top:412.27px;">17.33</div>
 <div class="num" style="left:511px;width:100px;top:412.27px;">21.85</div>
 <div class="num" style="left:582.2px;width:100px;top:412.27px;">N/A</div>
 <div class="mt" style="left:23.5px;top:425.65999999999997px;">VS Buffer Main Memory Bytes Read</div>
 <div class="num" style="left:295.79999999999995px;width:100px;top:425.65999999999997px;">N/A</div>
 <div class="num" style="left:366.5px;width:100px;top:425.65999999999997px;">256.50 KiB</div>
 <div class="num" style="left:440.20000000000005px;width:100px;top:425.65999999999997px;">608.44 KiB</div>
 <div class="num" style="left:511px;width:100px;top:425.65999999999997px;">960.37 KiB</div>
 <div class="num" style="left:582.2px;width:100px;top:425.65999999999997px;">1.19 MiB</div>
 <div class="abs" style="left:4px;top:438px;width:680px;height:17px;border-radius:4.5px;background:#696969;border:1px solid #636363"></div>
 <div class="mt" style="left:29.599999999999994px;top:440px;font-size:8.8px;color:#565656">Filter</div>
 <div class="abs" style="left:0;top:457px;width:695px;height:22px;background:#6e6e6e;border-top:1px solid #686868"></div>
 <svg class="abs" style="left:666.5px;top:227.3px" width="7" height="7" viewBox="0 0 7 7"><circle cx="3.5" cy="3.4" r="2.5" fill="none" stroke="#333" stroke-width="1.3"/><path d="M2.2 3.4h2.4M3.6 2.4l1.1 1-1.1 1" fill="none" stroke="#4a4a4a" stroke-width=".6"/></svg>
 <svg class="abs" style="left:6.5px;top:440px" width="22" height="12" viewBox="0 0 22 12"><rect x=".9" y=".9" width="19.2" height="9.4" rx="4.7" fill="none" stroke="#3a3a3a" stroke-width=".8"/><path d="M4.3 4h5.6M5.3 5.7h3.6M6.3 7.4h1.6" stroke="#3a3a3a" stroke-width=".8"/><path d="M13.3 4.7l1.9 1.9 1.9-1.9" fill="none" stroke="#3a3a3a" stroke-width=".8" stroke-linecap="round" stroke-linejoin="round"/></svg>
 <svg class="abs" style="left:8px;top:463px" width="14" height="10" viewBox="0 0 14 10"><path d="M1.8 1 h7.4 q.6 0 1 .5 l1.8 2.5 q.3 .4 0 .8 l-1.8 2.5 q-.4 .5 -1 .5 h-7.4 q-.9 0 -.9 -.9 v-5 q0 -.9 .9 -.9 z" fill="#1f4097"/></svg>
 <div class="abs" style="left:26px;top:463px;width:1px;height:9px;background:#676767"></div>
 <svg class="abs" style="left:31px;top:461px" width="13" height="13" viewBox="0 0 13 13"><rect x="1.5" y="1.5" width="10" height="10" rx="1.6" fill="none" stroke="#333" stroke-width=".9"/></svg>
 <svg class="abs" style="left:53.5px;top:461.5px" width="12" height="12" viewBox="0 0 12 12"><ellipse cx="6" cy="6.8" rx="2.7" ry="3.5" fill="none" stroke="#333" stroke-width=".9"/><path d="M6 3.4v6.8" stroke="#333" stroke-width=".7"/><path d="M4.3 3.6 Q6 1.2 7.7 3.6" fill="none" stroke="#333" stroke-width=".9"/><path d="M3.3 5.4 L1.3 4.4 M3.2 7.2 H1 M3.5 9 L1.6 10.4 M8.7 5.4 L10.7 4.4 M8.8 7.2 H11 M8.5 9 L10.4 10.4" stroke="#333" stroke-width=".8" stroke-linecap="round"/></svg>
 <svg class="abs" style="left:76.5px;top:461.5px" width="11" height="12" viewBox="0 0 11 12"><path d="M8.7 4.4 A3.7 3.7 0 1 0 9.2 7.2" fill="none" stroke="#555" stroke-width=".9" stroke-linecap="round"/><path d="M6.2 1.6 L8.8 3.6 L6 4.8" fill="none" stroke="#555" stroke-width=".8" stroke-linejoin="round" stroke-linecap="round"/></svg>
 <svg class="abs" style="left:98px;top:461px" width="13" height="13" viewBox="0 0 13 13"><circle cx="6.6" cy="6.5" r="5" fill="none" stroke="#333" stroke-width=".9"/><circle cx="6.6" cy="6.5" r="3.4" fill="none" stroke="#3c3c3c" stroke-width=".5" stroke-dasharray=".8 1"/><path d="M5.2 7.9 L8.4 4.7" stroke="#2c2c2c" stroke-width="1.3" stroke-linecap="round"/></svg>
 <svg class="abs" style="left:674px;top:462px" width="12" height="12" viewBox="0 0 12 12"><rect x="1.4" y="1.4" width="9" height="8.8" rx="1.5" fill="none" stroke="#333" stroke-width=".9"/><path d="M2.9 8h6" stroke="#2a2a2a" stroke-width="1.6"/></svg>
 <!--MAINBODY3-->
</div>

<div class="abs" style="left:224.5px;top:108.2px;width:694.5px;height:101px;background:#fff;border-radius:2.5px"></div>
<div class="abs" style="left:225px;top:127px;width:688px;height:1px;background:#ececec"></div>
<div class="abs" style="left:552px;top:112.5px;width:1px;height:11px;background:#e2e2e2"></div>
<div class="abs" style="left:623px;top:112px;width:1px;height:11px;background:#e2e2e2"></div>
<div class="abs" style="left:694px;top:112px;width:1px;height:11px;background:#e2e2e2"></div>
<div class="abs" style="left:768px;top:112px;width:1px;height:11px;background:#e2e2e2"></div>
<div class="abs" style="left:838px;top:112px;width:1px;height:11px;background:#e2e2e2"></div>
<div class="mt" style="left:239.5px;top:111.8px;color:#262626;">Counters</div>
<div class="num" style="left:519.5px;width:100px;top:112.5px;color:#262626;">Draw</div>
<div class="num" style="left:590.5px;width:100px;top:112.5px;color:#262626;">Encoder</div>
<div class="num" style="left:664.5px;width:100px;top:112.5px;color:#262626;">Median</div>
<div class="num" style="left:734.5px;width:100px;top:112.5px;color:#262626;">Max</div>
<div class="num" style="left:806px;width:100px;top:112.5px;color:#262626;">Total</div>
<div class="mt" style="left:241.5px;top:129.3px;color:#262626;font-weight:700;color:#1c1c1c;font-size:8.5px;-webkit-text-stroke:0">Vertices</div>
<div class="abs" style="left:225px;top:142px;width:688px;height:12px;background:#2b5fd6"></div><div class="abs" style="left:225px;top:154px;width:688px;height:1px;background:rgba(43,95,214,.4)"></div>
<div class="mt" style="left:248.8px;top:142.5px;color:#fff;font-size:8.95px">Vertices</div>
<div class="num" style="left:520.8px;width:100px;top:142.5px;color:#262626;color:#fff">61,266</div>
<div class="num" style="left:591.5px;width:100px;top:142.5px;color:#262626;color:#fff">82,320</div>
<div class="num" style="left:665.2px;width:100px;top:142.5px;color:#262626;color:#fff">117,242</div>
<div class="num" style="left:736px;width:100px;top:142.5px;color:#262626;color:#fff">117,242</div>
<div class="num" style="left:807.2px;width:100px;top:142.5px;color:#262626;color:#fff">1,184,896</div>
<div class="mt" style="left:248.5px;top:156.0px;color:#262626;">Vertices Reused</div>
<div class="num" style="left:520.8px;width:100px;top:156.0px;color:#262626;">70.34%</div>
<div class="num" style="left:591.5px;width:100px;top:156.0px;color:#262626;">69.88%</div>
<div class="num" style="left:665.2px;width:100px;top:156.0px;color:#262626;">71.59%</div>
<div class="num" style="left:736px;width:100px;top:156.0px;color:#262626;">71.59%</div>
<div class="num" style="left:807.2px;width:100px;top:156.0px;color:#262626;">N/A</div>
<div class="mt" style="left:248.5px;top:169.4px;color:#262626;">Pixels per Vertex</div>
<div class="num" style="left:520.8px;width:100px;top:169.4px;color:#262626;">0.00</div>
<div class="num" style="left:591.5px;width:100px;top:169.4px;color:#262626;">0.00</div>
<div class="num" style="left:665.2px;width:100px;top:169.4px;color:#262626;">190.97</div>
<div class="num" style="left:736px;width:100px;top:169.4px;color:#262626;">190.97</div>
<div class="num" style="left:807.2px;width:100px;top:169.4px;color:#262626;">N/A</div>
<div class="mt" style="left:248.5px;top:182.8px;color:#262626;">Vertices per Second</div>
<div class="num" style="left:520.8px;width:100px;top:182.8px;color:#262626;">N/A</div>
<div class="num" style="left:591.5px;width:100px;top:182.8px;color:#262626;">149,386,900.00</div>
<div class="num" style="left:665.2px;width:100px;top:182.8px;color:#262626;">151,970,800.00</div>
<div class="num" style="left:736px;width:100px;top:182.8px;color:#262626;">154,554,800.00</div>
<div class="num" style="left:807.2px;width:100px;top:182.8px;color:#262626;">N/A</div>
<div class="mt" style="left:248.5px;top:196.2px;color:#262626;">VS Invocation Unit Utilization</div>
<div class="num" style="left:520.8px;width:100px;top:196.2px;color:#262626;">N/A</div>
<div class="num" style="left:591.5px;width:100px;top:196.2px;color:#262626;">19.11%</div>
<div class="num" style="left:665.2px;width:100px;top:196.2px;color:#262626;">15.51%</div>
<div class="num" style="left:736px;width:100px;top:196.2px;color:#262626;">19.10%</div>
<div class="num" style="left:807.2px;width:100px;top:196.2px;color:#262626;">N/A</div>
<div class="abs" style="left:312.5px;top:161px;width:212.5px;height:16px;border-radius:3px;background:#ebe8e6;box-shadow:0 1px 3px rgba(0,0,0,.22),0 0 0 .5px rgba(0,0,0,.10)"></div>
<div class="mt" style="left:317.3px;top:163px;color:#5a5856;font-size:8.93px">Number of vertices submitted to the render pipeline</div>
<!--HILITE2-->

</div><div id="frame"></div></div>
</body></html>
